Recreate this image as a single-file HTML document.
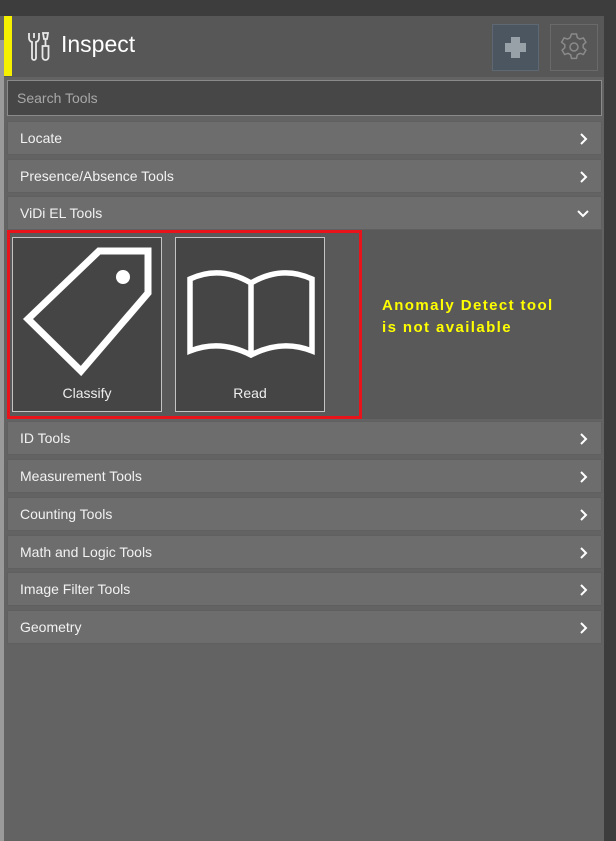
<!DOCTYPE html>
<html><head><style>
*{margin:0;padding:0;box-sizing:border-box}
body{width:616px;height:841px;background:#3d3d3d;position:relative;overflow:hidden;font-family:"Segoe UI","Liberation Sans",sans-serif}
.abs{position:absolute}
.row{position:absolute;left:7px;width:595px;height:34px;background:#6d6d6d;border:1px solid #606060;color:#f2f2f2;font-size:14px;line-height:32px;padding-left:12px}
.row svg{position:absolute;right:12px;top:11px}
.tile{position:absolute;top:237px;width:150px;height:175px;background:#454545;border:1px solid #c4c4c4;color:#eee;font-size:14px;text-align:center}
.tile span{position:absolute;left:0;right:0;top:147px}
.tile svg{position:absolute;left:0;top:0}
</style></head><body>
<div class="abs" style="left:0;top:16px;width:604px;height:825px;background:#636363"></div>
<div class="abs" style="left:0;top:40px;width:4px;height:801px;background:#9a9a9a"></div>
<div class="abs" style="left:4px;top:16px;width:600px;height:61px;background:#575757"></div>
<div class="abs" style="left:4px;top:16px;width:8px;height:60px;background:#f5f000"></div>
<svg class="abs" style="left:26px;top:32px" width="26" height="30" viewBox="0 0 26 30" fill="none" stroke="#e8e8e8" stroke-width="1.8"><path d="M3 1v5a4 4 0 0 0 3 4v16a2 2 0 0 0 4 0V10a4 4 0 0 0 3-4V1M8 1v5"/><path d="M17 1h5l-1 6h-3zM19.5 7v7M16.5 14h6v11a3 3 0 0 1-6 0z"/></svg>
<div class="abs" style="left:61px;top:31px;font-size:23px;color:#fff">Inspect</div>
<div class="abs" style="left:492px;top:24px;width:47px;height:47px;background:#4b5661;border:1px solid #5e6873"></div>
<div class="abs" style="left:511px;top:37px;width:9px;height:21px;background:#98a0a8"></div>
<div class="abs" style="left:505px;top:43px;width:21px;height:9px;background:#98a0a8"></div>
<div class="abs" style="left:550px;top:24px;width:48px;height:47px;border:1px solid #6a6a6a"></div>
<svg class="abs" style="left:559px;top:32px" width="30" height="30" viewBox="0 0 30 30" fill="none" stroke="#8a8a8a" stroke-width="1.5"><path d="M12.5 2h5l.8 3.6 2.6 1.5 3.5-1.2 2.5 4.3-2.7 2.5v3l2.7 2.5-2.5 4.3-3.5-1.2-2.6 1.5-.8 3.6h-5l-.8-3.6-2.6-1.5-3.5 1.2-2.5-4.3 2.7-2.5v-3L2.6 10.2l2.5-4.3 3.5 1.2 2.6-1.5z"/><circle cx="15" cy="15" r="4"/></svg>
<div class="abs" style="left:7px;top:80px;width:595px;height:36px;background:#474747;border:1px solid #8a8a8a;color:#a8a8a8;font-size:14px;line-height:34px;padding-left:9px">Search Tools</div>
<div class="row" style="top:121px">Locate<svg width="10" height="12"><path d="M2 1l5 5-5 5" stroke="#fff" stroke-width="2" fill="none"/></svg></div>
<div class="row" style="top:159px">Presence/Absence Tools<svg width="10" height="12"><path d="M2 1l5 5-5 5" stroke="#fff" stroke-width="2" fill="none"/></svg></div>
<div class="row" style="top:196px">ViDi EL Tools<svg width="12" height="10" style="top:12px"><path d="M1 2l5 5 5-5" stroke="#fff" stroke-width="2" fill="none"/></svg></div>
<div class="abs" style="left:7px;top:230px;width:595px;height:189px;background:#595959"></div>
<div class="abs" style="left:7px;top:230px;width:355px;height:189px;border:3px solid #e8141c"></div>
<div class="tile" style="left:12px"><svg width="150" height="145" viewBox="0 0 150 145" fill="none" stroke="#fff" stroke-width="7" stroke-linejoin="miter"><path d="M86 13h49v42l-67 78-53-52z"/><circle cx="110" cy="39" r="7" fill="#fff" stroke="none"/></svg><span>Classify</span></div>
<div class="tile" style="left:175px"><svg width="150" height="145" viewBox="0 0 150 145" fill="none" stroke="#fff" stroke-width="5.5"><path d="M14 41q30-14 61 4q31-18 61-4v72q-30-12-61 4q-31-16-61-4zM75 45v72"/></svg><span>Read</span></div>
<div class="abs" style="left:382px;top:295px;color:#ffff00;font-weight:bold;font-size:15px;letter-spacing:1.4px;line-height:22px;font-family:'Liberation Sans',sans-serif">Anomaly Detect tool<br>is not available</div>
<div class="row" style="top:421px">ID Tools<svg width="10" height="12"><path d="M2 1l5 5-5 5" stroke="#fff" stroke-width="2" fill="none"/></svg></div>
<div class="row" style="top:459px">Measurement Tools<svg width="10" height="12"><path d="M2 1l5 5-5 5" stroke="#fff" stroke-width="2" fill="none"/></svg></div>
<div class="row" style="top:497px">Counting Tools<svg width="10" height="12"><path d="M2 1l5 5-5 5" stroke="#fff" stroke-width="2" fill="none"/></svg></div>
<div class="row" style="top:535px">Math and Logic Tools<svg width="10" height="12"><path d="M2 1l5 5-5 5" stroke="#fff" stroke-width="2" fill="none"/></svg></div>
<div class="row" style="top:572px">Image Filter Tools<svg width="10" height="12"><path d="M2 1l5 5-5 5" stroke="#fff" stroke-width="2" fill="none"/></svg></div>
<div class="row" style="top:610px">Geometry<svg width="10" height="12"><path d="M2 1l5 5-5 5" stroke="#fff" stroke-width="2" fill="none"/></svg></div>
</body></html>
